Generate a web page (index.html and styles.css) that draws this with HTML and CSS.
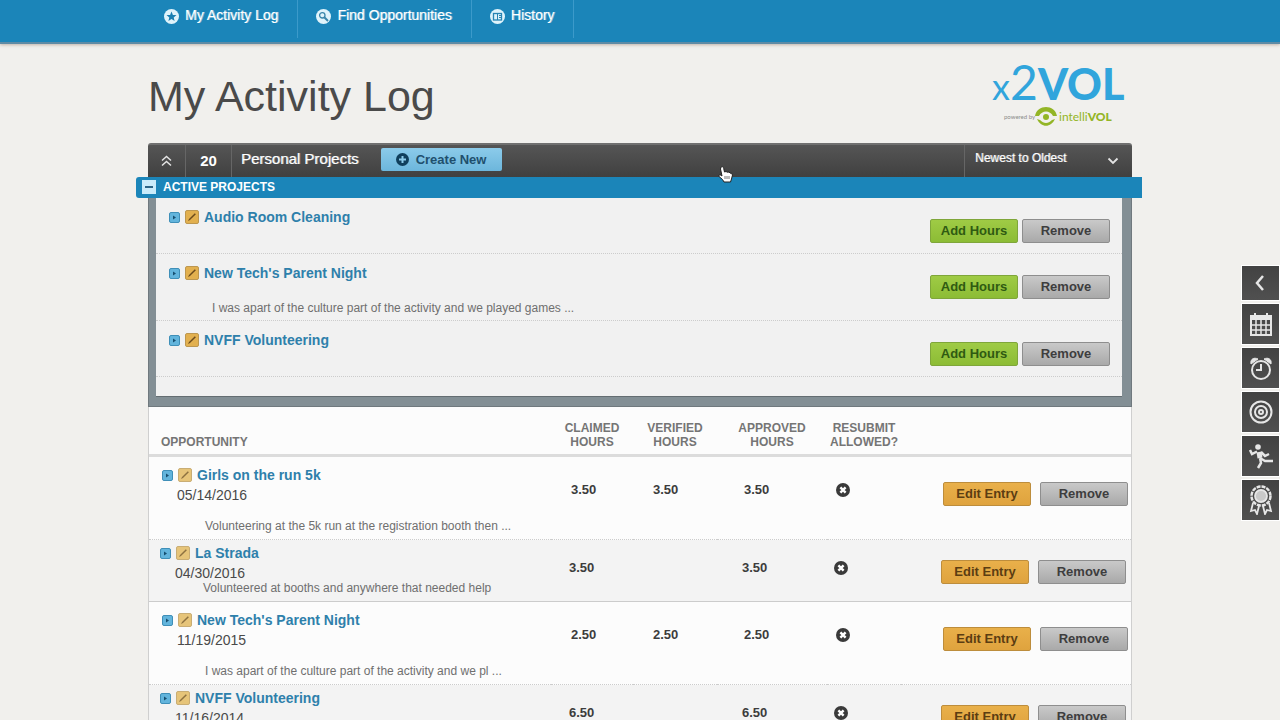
FILE: index.html
```html
<!DOCTYPE html>
<html lang="en">
<head>
    <meta charset="UTF-8">
    <meta name="viewport" content="width=device-width, initial-scale=1.0">
    <title>My Activity Log</title>
    <link rel="stylesheet" href="styles.css">
</head>
<body>
    <!-- Shared icons -->
    <svg class="sprite" aria-hidden="true">
        <symbol id="expand" viewBox="0 0 11 11">
            <rect x="0.5" y="0.5" width="10" height="10" rx="1.5" fill="#62b4dc" stroke="#3f8fb8"/>
            <path d="M4 3.5 L7 5.5 L4 7.5 Z" fill="#174f70"/>
        </symbol>
        <symbol id="pencil" viewBox="0 0 14 14">
            <rect x="0.5" y="0.5" width="13" height="13" rx="1.5" fill="#e2b04f" stroke="#bd9750"/>
            <path d="M3 11 L4 9 L9.8 3.2 L10.9 4.3 L5 10.1 Z" fill="#6b4a1c"/>
        </symbol>
        <symbol id="pencil-light" viewBox="0 0 14 14">
            <rect x="0.5" y="0.5" width="13" height="13" rx="1.5" fill="#e6c479" stroke="#c9ad74"/>
            <path d="M3 11 L4 9 L9.8 3.2 L10.9 4.3 L5 10.1 Z" fill="#8d7140"/>
        </symbol>
        <symbol id="denied" viewBox="0 0 14 14">
            <circle cx="7" cy="7" r="7" fill="#3a3a3a"/>
            <path d="M4.4 4.4 L9.6 9.6 M9.6 4.4 L4.4 9.6" stroke="#fff" stroke-width="2.4"/>
        </symbol>
    </svg>

    <header class="topbar">
        <nav class="container">
            <a href="#">
                <svg width="15" height="15" viewBox="0 0 15 15"><circle cx="7.500" cy="7.500" r="7.500" fill="#dff3fb"/><path d="M7.500 2.500 L8.900 5.900 L12.500 6.100 L9.700 8.400 L10.600 12 L7.500 10 L4.400 12 L5.300 8.400 L2.500 6.100 L6.100 5.900 Z" fill="#1a7fb2"/></svg>
                My Activity Log
            </a>
            <a href="#">
                <svg width="15" height="15" viewBox="0 0 15 15"><circle cx="7.500" cy="7.500" r="7.500" fill="#dff3fb"/><circle cx="6.300" cy="6.300" r="2.700" fill="none" stroke="#3b86ab" stroke-width="1.300"/><path d="M8.300 8.300 L12 12" stroke="#3b86ab" stroke-width="2"/></svg>
                Find Opportunities
            </a>
            <a href="#">
                <svg width="15" height="15" viewBox="0 0 15 15"><circle cx="7.500" cy="7.500" r="7.500" fill="#dff3fb"/><rect x="3.500" y="4.500" width="8" height="6.500" fill="none" stroke="#2784b3" stroke-width="1.300"/><path d="M7.500 4.500 V11 M9 6.500 H11 M9 8.500 H11" stroke="#2784b3"/></svg>
                History
            </a>
        </nav>
    </header>

    <main class="container">
        <div class="page-head">
            <h1>My Activity Log</h1>
            <svg class="brand" width="140" height="66" viewBox="0 0 140 66" role="img" aria-label="x2VOL powered by intelliVOL">
                <g fill="#31a5dc">
                    <text class="brand-light" x="0" y="40" font-size="36">x</text>
                    <text class="brand-light" x="18" y="40" font-size="48">2</text>
                    <text class="brand-heavy" x="46" y="40" font-size="43">VOL</text>
                </g>
                <text class="brand-small" x="12" y="59" font-size="6">powered by</text>
                <path d="M43 56 C45 44 63 44 65 56 L61 56 C58 50 50 50 47 56 Z" fill="#93b526"/>
                <path d="M45 59 C49 68 59 68 63 59 L60 60 C56 64 52 64 48 60 Z" fill="#93b526"/>
                <circle cx="54" cy="57" r="3" fill="#93b526"/>
                <text class="brand-sub" x="67" y="61" font-size="12">intelli<tspan class="brand-bold">VOL</tspan></text>
            </svg>
        </div>

        <div class="toolbar">
            <button class="collapse" aria-label="Collapse all">
                <svg width="11" height="12" viewBox="0 0 11 12"><path d="M1 5.500 L5.500 1.500 L10 5.500 M1 10.500 L5.500 6.500 L10 10.500" fill="none" stroke="#e4e4e4" stroke-width="1.500"/></svg>
            </button>
            <span class="count">20</span>
            <h2>Personal Projects</h2>
            <button class="create">
                <svg width="13" height="13" viewBox="0 0 13 13"><circle cx="6.500" cy="6.500" r="6.500" fill="#103f5c"/><path d="M6.500 3 V10 M3 6.500 H10" stroke="#8ccbea" stroke-width="2"/></svg>
                Create New
            </button>
            <div class="sort">
                <select aria-label="Sort order">
                    <option>Newest to Oldest</option>
                    <option>Oldest to Newest</option>
                </select>
                <svg width="12" height="8" viewBox="0 0 12 8"><path d="M1.500 1.500 L6 6 L10.500 1.500" fill="none" stroke="#e4e4e4" stroke-width="1.800"/></svg>
            </div>
            <svg class="pointer" width="16" height="18" viewBox="0 0 16 18"><path d="M3 1 C4.500 0 5.500 1 5.700 2.500 L6.500 6 L8 5.500 L9.500 6.300 L11 6 L12.200 7.200 L13.500 7.300 L14.500 9 L13.500 13 L12.500 16 H6 L4.500 13.500 L1 10.500 C0.500 9 2 8.500 3 9.300 L4 10 L2.500 3 Z" fill="#fff" stroke="#222"/><path d="M7 10 V13 M9 10 V13 M11 10 V13" stroke="#777"/></svg>
        </div>

        <div class="section-bar">
            <button aria-label="Collapse active projects"></button>
            <h3>ACTIVE PROJECTS</h3>
        </div>

        <section class="active">
            <ul>
                <li>
                    <div>
                        <div class="name"><svg class="ico-expand"><use href="#expand"/></svg><svg class="ico-pencil"><use href="#pencil"/></svg><a href="#">Audio Room Cleaning</a></div>
                    </div>
                    <div class="actions"><button class="btn green">Add Hours</button><button class="btn">Remove</button></div>
                </li>
                <li>
                    <div>
                        <div class="name"><svg class="ico-expand"><use href="#expand"/></svg><svg class="ico-pencil"><use href="#pencil"/></svg><a href="#">New Tech's Parent Night</a></div>
                        <p>I was apart of the culture part of the activity and we played games ...</p>
                    </div>
                    <div class="actions"><button class="btn green">Add Hours</button><button class="btn">Remove</button></div>
                </li>
                <li>
                    <div>
                        <div class="name"><svg class="ico-expand"><use href="#expand"/></svg><svg class="ico-pencil"><use href="#pencil"/></svg><a href="#">NVFF Volunteering</a></div>
                    </div>
                    <div class="actions"><button class="btn green">Add Hours</button><button class="btn">Remove</button></div>
                </li>
            </ul>
        </section>

        <table class="log">
            <colgroup>
                <col>
                <col class="col-claimed">
                <col class="col-verified">
                <col class="col-approved">
                <col class="col-resubmit">
                <col class="col-actions">
            </colgroup>
            <thead>
                <tr>
                    <th class="first">OPPORTUNITY</th>
                    <th>CLAIMED<br>HOURS</th>
                    <th>VERIFIED<br>HOURS</th>
                    <th>APPROVED<br>HOURS</th>
                    <th>RESUBMIT<br>ALLOWED?</th>
                    <th></th>
                </tr>
            </thead>
            <tbody>
                <tr>
                    <td class="entry">
                        <div class="name"><svg class="ico-expand"><use href="#expand"/></svg><svg class="ico-pencil"><use href="#pencil-light"/></svg><a href="#">Girls on the run 5k</a></div>
                        <time>05/14/2016</time>
                        <p>Volunteering at the 5k run at the registration booth then ...</p>
                    </td>
                    <td class="hours">3.50</td>
                    <td class="hours">3.50</td>
                    <td class="hours approved">3.50</td>
                    <td class="resubmit"><svg class="ico-denied" role="img" aria-label="No"><use href="#denied"/></svg></td>
                    <td class="buttons"><div class="actions"><button class="btn orange">Edit Entry</button><button class="btn">Remove</button></div></td>
                </tr>
                <tr>
                    <td class="entry">
                        <div class="name"><svg class="ico-expand"><use href="#expand"/></svg><svg class="ico-pencil"><use href="#pencil-light"/></svg><a href="#">La Strada</a></div>
                        <time>04/30/2016</time>
                        <p>Volunteered at booths and anywhere that needed help</p>
                    </td>
                    <td class="hours">3.50</td>
                    <td class="hours"></td>
                    <td class="hours approved">3.50</td>
                    <td class="resubmit"><svg class="ico-denied" role="img" aria-label="No"><use href="#denied"/></svg></td>
                    <td class="buttons"><div class="actions"><button class="btn orange">Edit Entry</button><button class="btn">Remove</button></div></td>
                </tr>
                <tr>
                    <td class="entry">
                        <div class="name"><svg class="ico-expand"><use href="#expand"/></svg><svg class="ico-pencil"><use href="#pencil-light"/></svg><a href="#">New Tech's Parent Night</a></div>
                        <time>11/19/2015</time>
                        <p>I was apart of the culture part of the activity and we pl ...</p>
                    </td>
                    <td class="hours">2.50</td>
                    <td class="hours">2.50</td>
                    <td class="hours approved">2.50</td>
                    <td class="resubmit"><svg class="ico-denied" role="img" aria-label="No"><use href="#denied"/></svg></td>
                    <td class="buttons"><div class="actions"><button class="btn orange">Edit Entry</button><button class="btn">Remove</button></div></td>
                </tr>
                <tr>
                    <td class="entry">
                        <div class="name"><svg class="ico-expand"><use href="#expand"/></svg><svg class="ico-pencil"><use href="#pencil-light"/></svg><a href="#">NVFF Volunteering</a></div>
                        <time>11/16/2014</time>
                    </td>
                    <td class="hours">6.50</td>
                    <td class="hours"></td>
                    <td class="hours approved">6.50</td>
                    <td class="resubmit"><svg class="ico-denied" role="img" aria-label="No"><use href="#denied"/></svg></td>
                    <td class="buttons"><div class="actions"><button class="btn orange">Edit Entry</button><button class="btn">Remove</button></div></td>
                </tr>
            </tbody>
        </table>
    </main>

    <aside class="rail">
        <button class="short" aria-label="Open panel">
            <svg width="26" height="26" viewBox="0 0 26 26"><path d="M15 6 L9 13 L15 20" fill="none" stroke="#e6e6e6" stroke-width="2.500"/></svg>
        </button>
        <button aria-label="Calendar">
            <svg width="26" height="26" viewBox="0 0 26 26" fill="none" stroke="#e6e6e6"><rect x="3" y="5" width="20" height="19" stroke-width="2"/><path d="M3 7 H23" stroke-width="4"/><path d="M7 2 V6 M19 2 V6" stroke-width="2"/><path d="M3 14 H23 M3 19 H23 M8 9 V24 M13 9 V24 M18 9 V24" stroke-width="1.500"/></svg>
        </button>
        <button aria-label="Hours">
            <svg width="26" height="26" viewBox="0 0 26 26" fill="none" stroke="#e6e6e6" stroke-width="2"><circle cx="13" cy="15" r="9"/><path d="M13 9 V15 H8"/><path d="M3 9 C2 4 6 2 10 4 Z M23 9 C24 4 20 2 16 4 Z" fill="#e6e6e6" stroke-width="1"/></svg>
        </button>
        <button aria-label="Goals">
            <svg width="26" height="26" viewBox="0 0 26 26" fill="none" stroke="#e6e6e6" stroke-width="2"><circle cx="13" cy="13" r="10.500"/><circle cx="13" cy="13" r="6"/><circle cx="13" cy="13" r="2"/></svg>
        </button>
        <button aria-label="Activities">
            <svg width="26" height="26" viewBox="0 0 26 26" fill="none" stroke="#e6e6e6" stroke-width="2.500"><circle cx="10" cy="4" r="2.800" fill="#e6e6e6" stroke="none"/><path d="M2 7 L4 11 L9 8.500 M13 9 L17 13 L21 11"/><path d="M11 9 L12 15" stroke-width="5"/><path d="M12 15 L17 18 L25 18 M12 15 L13 20 L10 25"/></svg>
        </button>
        <button aria-label="Awards">
            <svg width="28" height="30" viewBox="0 0 28 30" fill="none" stroke="#e6e6e6" stroke-width="1.800"><circle cx="14" cy="11" r="6" fill="#c9c9c9"/><circle cx="14" cy="11" r="9.500" stroke-width="2.500" stroke-dasharray="4 1"/><path d="M6 18 L4 26 L8 25 L10 29 L12 21 M22 18 L24 26 L20 25 L18 29 L16 21"/></svg>
        </button>
    </aside>
</body>
</html>
```

FILE: styles.css
```css
* {
    margin: 0;
    padding: 0;
    box-sizing: border-box;
}

html {
    scrollbar-width: none;
}

body {
    font-family: "Liberation Sans", Arial, Helvetica, sans-serif;
    font-size: 14px;
    color: #4a4a4a;
    background: #f1f0ed;
}

button,
select {
    font-family: inherit;
    border: 0;
    cursor: pointer;
}

a {
    text-decoration: none;
}

svg {
    flex-shrink: 0;
}

.sprite {
    display: none;
}

.container {
    width: 100%;
    max-width: 984px;
    margin: 0 auto;
}

/* Top navigation */
.topbar {
    height: 44px;
    background: #1b85b9;
    border-bottom: 2px solid #5e8ba5;
    box-shadow: 0 1px 3px rgba(120, 90, 70, 0.4);
}

.topbar nav {
    display: flex;
}

.topbar a {
    display: flex;
    gap: 6px;
    height: 38px;
    padding: 7px 19px 0 18px;
    line-height: 16px;
    color: #fff;
    text-shadow: 1px 0 0 rgba(255, 255, 255, 0.5);
    border-right: 1px solid #3c9aca;
}

.topbar a:first-child {
    padding-left: 16px;
}

.topbar svg {
    margin-top: 2px;
}

/* Title and brand */
.page-head {
    display: flex;
    justify-content: space-between;
    height: 99px;
    padding-top: 16px;
}

h1 {
    padding-top: 12px;
    font-size: 43px;
    font-weight: 400;
    line-height: 48px;
}

.brand {
    overflow: visible;
}

.brand-light {
    font-family: Lato, sans-serif;
    font-weight: 400;
}

.brand-heavy {
    font-family: Lato, sans-serif;
    font-weight: 900;
}

.brand-small {
    font-family: Lato, sans-serif;
    fill: #8b8b8b;
}

.brand-sub {
    font-family: Lato, sans-serif;
    fill: #93b526;
}

.brand-bold {
    font-weight: 900;
}

/* Dark toolbar */
.toolbar {
    position: relative;
    display: flex;
    height: 34px;
    color: #fff;
    background: linear-gradient(#555, #404040);
    border-top: 2px solid #707070;
    border-radius: 3px 3px 0 0;
}

.collapse {
    width: 38px;
    padding-top: 3px;
    background: none;
    border-right: 1px solid #666;
}

.count {
    width: 46px;
    font-size: 15px;
    font-weight: 700;
    line-height: 32px;
    text-align: center;
    border-right: 1px solid #666;
}

.toolbar h2 {
    padding: 0 22px 0 9px;
    font-size: 15px;
    font-weight: 400;
    line-height: 28px;
    text-shadow: 1px 0 0 rgba(255, 255, 255, 0.5);
}

.create {
    display: flex;
    gap: 7px;
    align-items: center;
    justify-content: center;
    width: 121px;
    height: 23px;
    margin-top: 3px;
    font-size: 13px;
    font-weight: 700;
    color: #1f4f6d;
    background: linear-gradient(#8ccbea, #6cb6dc);
    border-radius: 2px;
}

.sort {
    display: flex;
    align-items: center;
    width: 168px;
    margin-left: auto;
    padding-right: 13px;
    border-left: 1px solid #666;
}

.sort select {
    flex: 1;
    height: 26px;
    padding-left: 10px;
    align-self: flex-start;
    appearance: none;
    font-size: 12px;
    color: #fff;
    text-shadow: 1px 0 0 rgba(255, 255, 255, 0.5);
    background: none;
}

.pointer {
    position: absolute;
    top: 21px;
    left: 570px;
    z-index: 1;
}

.section-bar {
    display: flex;
    gap: 7px;
    align-items: center;
    height: 21px;
    margin: 0 -10px 0 -12px;
    padding: 0 6px 1px;
    background: #1b85b9;
    border-radius: 3px 0 0 3px;
}

.section-bar button {
    display: grid;
    place-items: center;
    width: 14px;
    height: 14px;
    background: #c9ebfa;
}

.section-bar button::before {
    content: "";
    width: 8px;
    height: 2px;
    background: #2b6486;
}

.section-bar h3 {
    font-size: 12px;
    color: #fff;
}

/* Active projects */
.active {
    padding: 0 9px 9px 7px;
    background: #838f95;
    border: 1px solid #70797e;
    border-top: 0;
}

.active ul {
    padding-bottom: 19px;
    list-style: none;
    background: #f1f1f1;
    border-bottom: 1px solid #646d72;
}

.active li {
    display: flex;
    justify-content: space-between;
    min-height: 56px;
    padding: 10px 12px 0 13px;
    border-bottom: 1px dotted #ccc;
}

.active p {
    padding: 18px 0 4px 43px;
    line-height: 16px;
}

.active .actions {
    gap: 4px;
    padding-top: 11px;
}

.name {
    display: flex;
    align-items: center;
    height: 18px;
}

.name a {
    font-weight: 700;
    color: #2e80ab;
}

p {
    font-size: 12px;
    color: #6f6f6f;
}

.ico-expand {
    width: 11px;
    height: 11px;
    margin-right: 5px;
}

.ico-pencil {
    width: 14px;
    height: 14px;
    margin-right: 5px;
}

.ico-denied {
    display: block;
    width: 14px;
    height: 14px;
}

.actions {
    display: flex;
    gap: 9px;
}

.btn {
    width: 88px;
    height: 24px;
    padding-bottom: 1px;
    font-size: 13px;
    font-weight: 700;
    color: #3e3e3e;
    background: linear-gradient(#c9c9c9, #a9a9a9);
    border: 1px solid #8e8e8e;
    border-radius: 2px;
}

.btn.green {
    color: #2f5a12;
    background: linear-gradient(#9fcb45, #8cbc35);
    border-color: #7fa63a;
}

.btn.orange {
    color: #5b3d12;
    background: linear-gradient(#e9b04a, #dfa33e);
    border-color: #bd8d3c;
}

/* Activity table */
.log {
    width: 100%;
    table-layout: fixed;
    border-spacing: 0;
    background: #fcfcfc;
    border: 1px solid #cfcfcf;
    border-top: 0;
}

.col-claimed {
    width: 82px;
}

.col-verified {
    width: 84px;
}

.col-approved {
    width: 110px;
}

.col-resubmit {
    width: 74px;
}

.col-actions {
    width: 230px;
}

.log th {
    height: 50px;
    padding-bottom: 5px;
    vertical-align: bottom;
    font-size: 12px;
    line-height: 14px;
    color: #757575;
    border-bottom: 3px solid #dcdcdc;
}

.log th.first {
    padding-left: 12px;
    text-align: left;
}

.log tbody tr {
    --indent: 2px;
    --top: 9px;
    --gap: 16px;
}

.log tbody tr:nth-child(even) {
    --indent: 0px;
    --top: 4px;
    --gap: 0px;
    background: #f3f3f3;
}

.log td {
    vertical-align: top;
    border-bottom: 1px dotted #ccc;
}

.log tr:nth-child(even) td {
    border-bottom-style: solid;
}

.entry {
    padding: var(--top) 0 6px calc(11px + var(--indent));
}

.entry time {
    display: block;
    padding: 2px 0 0 15px;
    line-height: 18px;
}

.entry p {
    padding: var(--gap) 0 0 43px;
    line-height: 13px;
}

.hours {
    padding-top: calc(16px + var(--top));
    padding-left: calc(18px + var(--indent));
    font-size: 13px;
    font-weight: 700;
    line-height: 15px;
    color: #3c3c3c;
}

.hours.approved {
    padding-left: calc(25px + var(--indent));
}

.resubmit {
    padding-top: calc(17px + var(--top));
    padding-left: calc(7px + var(--indent));
}

.buttons {
    padding-top: calc(16px + var(--top));
    padding-left: calc(40px + var(--indent));
}

/* Side shortcuts */
.rail {
    position: fixed;
    top: 266px;
    right: 1px;
    display: flex;
    flex-direction: column;
    gap: 4px;
}

.rail button {
    display: grid;
    place-items: center;
    width: 37px;
    height: 40px;
    background: linear-gradient(#424242, #505050);
    box-shadow: 0 0 0 1px #fff;
}

.rail .short {
    height: 34px;
}
```
